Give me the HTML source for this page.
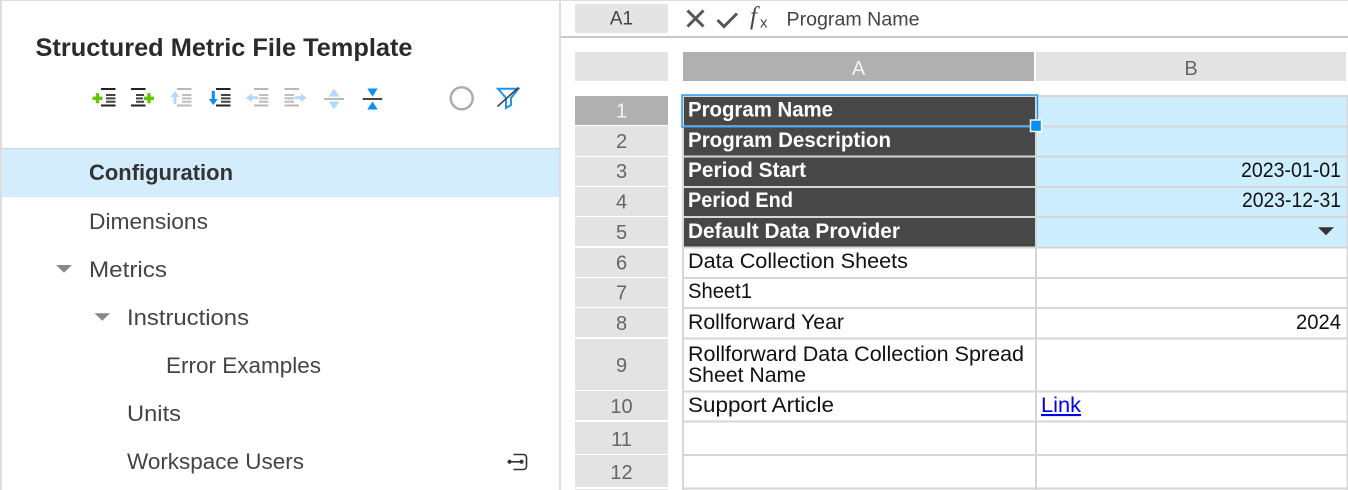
<!DOCTYPE html>
<html lang="en"><head><meta charset="utf-8"><title>Structured Metric File Template</title>
<style>
html,body{margin:0;padding:0;background:#fff;width:1348px;height:490px;overflow:hidden}
svg{display:block}
text{font-family:"Liberation Sans",sans-serif}
.n{font-size:22px;fill:#444}
.c{font-size:21px;fill:#111}
.b{font-size:21px;font-weight:bold;fill:#fff}
.h{font-size:20px;fill:#666;text-anchor:middle}
</style></head><body>
<svg width="1348" height="490" viewBox="0 0 1348 490" xmlns="http://www.w3.org/2000/svg">
<!-- left panel -->
<rect x="0" y="0" width="1348" height="1" fill="#ddd"/>
<rect x="0" y="0" width="2" height="490" fill="#ddd"/>
<rect x="559" y="0" width="2" height="490" fill="#ddd"/>
<rect x="2" y="148" width="557" height="1.5" fill="#d4d4d4"/>
<rect x="2" y="149" width="557" height="48" fill="#d4edfc"/>
<text x="35.500" y="56" font-size="25" font-weight="bold" fill="#2b2b2b" textLength="377" lengthAdjust="spacingAndGlyphs">Structured Metric File Template</text>

<!-- toolbar -->
<g>
<path d="M92.500 98.300h10M97.500 93.300v10" stroke="#66c400" stroke-width="3.400" fill="none"/>
<path d="M101 89h14.500M101 105.500h14.500" stroke="#222" stroke-width="2"/><path d="M106 95h9.500M106 98.400h9.500M106 101.800h9.500" stroke="#444" stroke-width="2"/>
<path d="M131 89h14.500M131 105.500h14.500" stroke="#222" stroke-width="2"/><path d="M136 95h8M136 98.400h7M136 101.800h8" stroke="#444" stroke-width="2"/>
<path d="M144 98.300h10M149 93.300v10" stroke="#66c400" stroke-width="3.400" fill="none"/>

<path d="M177 89h14.500M177 105.500h14.500" stroke="#b8b8b8" stroke-width="2"/><path d="M182 95h9.500M182 98.400h9.500M182 101.800h9.500" stroke="#bfbfbf" stroke-width="2"/>
<path d="M175 91l-4.500 6h3V104h3v-7h3z" fill="#b3d9ff"/>

<path d="M216 89h14.500M216 105.500h14.500" stroke="#222" stroke-width="2"/><path d="M221 95h9.500M221 98.400h9.500M221 101.800h9.500" stroke="#444" stroke-width="2"/>
<path d="M213.300 105l-4.500-6h3V91h3v8h3z" fill="#0a8ef0"/>

<path d="M254 89h14.300M254 105.500h14.300" stroke="#b8b8b8" stroke-width="2"/><path d="M259 95h9.300M259 98.400h9.300M259 101.800h9.300" stroke="#bfbfbf" stroke-width="2"/>
<path d="M246 97.700l6-4.500v3H258v3h-6v3z" fill="#b3d9ff"/>

<path d="M284.500 89h14.500M284.500 105.500h14.500" stroke="#b8b8b8" stroke-width="2"/><path d="M284.500 95h9.500M284.500 98.400h9.500M284.500 101.800h9.500" stroke="#bfbfbf" stroke-width="2"/>
<path d="M306.700 97.700l-6-4.500v3h-6v3h6v3z" fill="#b3d9ff"/>

<rect x="324" y="98" width="20" height="2" fill="#b8b8b8"/>
<path d="M334 88.500l5.500 8h-11zM334 109.500l5.500-8h-11z" fill="#b3d9ff"/>
<rect x="362.700" y="98" width="19.500" height="2" fill="#444"/>
<path d="M367.300 88.500h10.400l-5.200 8zM367.300 109.500h10.400l-5.200-8z" fill="#0a8ef0"/>

<circle cx="461.700" cy="98.300" r="11" fill="none" stroke="#aaa" stroke-width="2.400"/>
<path d="M498 88.800H518.500L511 98V105L506 108V98Z" fill="none" stroke="#1a96f5" stroke-width="2"/>
<path d="M497.500 106.500L518.500 87.500" stroke="#444" stroke-width="1.600"/>
</g>

<!-- tree -->
<text class="n" x="89" y="180" font-weight="bold" textLength="144" lengthAdjust="spacingAndGlyphs" style="fill:#333">Configuration</text>
<text class="n" x="89" y="229" textLength="119" lengthAdjust="spacingAndGlyphs">Dimensions</text>
<path d="M56 265h16l-8 7.700z" fill="#888"/>
<text class="n" x="89" y="277" textLength="78" lengthAdjust="spacingAndGlyphs">Metrics</text>
<path d="M94.500 313.300h15.500l-7.700 7.500z" fill="#888"/>
<text class="n" x="127" y="325" textLength="122" lengthAdjust="spacingAndGlyphs">Instructions</text>
<text class="n" x="166" y="373" textLength="155" lengthAdjust="spacingAndGlyphs">Error Examples</text>
<text class="n" x="127" y="421" textLength="54" lengthAdjust="spacingAndGlyphs">Units</text>
<text class="n" x="127" y="469" textLength="177" lengthAdjust="spacingAndGlyphs">Workspace Users</text>
<path d="M513.500 454.500H523.500A3 3 0 0 1 526.500 457.500V466.500A3 3 0 0 1 523.500 469.500H513.500" fill="none" stroke="#333" stroke-width="1.600"/>
<path d="M509.500 461.800H521.500" stroke="#333" stroke-width="1.600"/>
<circle cx="509.500" cy="461.800" r="2" fill="#333"/><circle cx="521.500" cy="461.800" r="2" fill="#333"/>

<!-- formula bar -->
<rect x="575" y="4" width="93" height="29" rx="2" fill="#e4e4e4"/>
<text x="621.500" y="24.500" font-size="19" fill="#444" text-anchor="middle">A1</text>
<path d="M687.500 10.500L703.500 26.500M703.500 10.500L687.500 26.500" stroke="#555" stroke-width="3" fill="none"/>
<path d="M717.500 20L724 26.500L737 13.500" stroke="#555" stroke-width="3" fill="none"/>
<text x="750" y="24" font-size="25" font-style="italic" fill="#444" style="font-family:'Liberation Serif',serif">f</text>
<text x="760" y="27.500" font-size="15" fill="#444">x</text>
<text x="786.500" y="25.500" font-size="19" fill="#444" textLength="133" lengthAdjust="spacingAndGlyphs">Program Name</text>
<rect x="561" y="36" width="787" height="2" fill="#c8c8c8"/>

<!-- column headers -->
<rect x="575" y="52" width="93" height="29" rx="1" fill="#e4e4e4"/>
<rect x="683" y="52" width="351" height="29" fill="#b0b0b0"/>
<rect x="1036" y="52" width="310" height="29" fill="#e3e3e3"/>
<text class="h" x="858.500" y="75" style="fill:#f4f4f4">A</text>
<text class="h" x="1191" y="75">B</text>

<!-- row headers -->
<g fill="#e3e3e3">
<rect x="575" y="96" width="93" height="29" fill="#b0b0b0"/>
<rect x="575" y="126" width="93" height="30"/>
<rect x="575" y="157" width="93" height="29"/>
<rect x="575" y="187" width="93" height="29"/>
<rect x="575" y="217" width="93" height="29"/>
<rect x="575" y="248" width="93" height="29"/>
<rect x="575" y="278" width="93" height="29"/>
<rect x="575" y="308" width="93" height="29"/>
<rect x="575" y="339" width="93" height="51"/>
<rect x="575" y="391" width="93" height="29"/>
<rect x="575" y="422" width="93" height="32"/>
<rect x="575" y="455" width="93" height="32"/>
<rect x="575" y="489" width="93" height="1"/>
</g>
<text class="h" x="621.500" y="117.500" style="fill:#f4f4f4">1</text>
<text class="h" x="621.500" y="148">2</text>
<text class="h" x="621.500" y="178">3</text>
<text class="h" x="621.500" y="208.500">4</text>
<text class="h" x="621.500" y="239">5</text>
<text class="h" x="621.500" y="269.500">6</text>
<text class="h" x="621.500" y="299.500">7</text>
<text class="h" x="621.500" y="330">8</text>
<text class="h" x="621.500" y="372">9</text>
<text class="h" x="621.500" y="413">10</text>
<text class="h" x="621.500" y="446">11</text>
<text class="h" x="621.500" y="479">12</text>

<!-- cell fills -->
<rect x="1037" y="96" width="310" height="151" fill="#cdeeff"/>
<rect x="683" y="96" width="352" height="151" fill="#474747"/>

<!-- grid lines -->
<g fill="#d6d6d6">
<rect x="682" y="95" width="666" height="2"/>
<rect x="682" y="125.500" width="666" height="2"/>
<rect x="682" y="155.500" width="666" height="2"/>
<rect x="682" y="186" width="666" height="2"/>
<rect x="682" y="216" width="666" height="2"/>
<rect x="682" y="246.500" width="666" height="2"/>
<rect x="682" y="277" width="666" height="2"/>
<rect x="682" y="307" width="666" height="2"/>
<rect x="682" y="337.500" width="666" height="2"/>
<rect x="682" y="390.500" width="666" height="2"/>
<rect x="682" y="420.500" width="666" height="2"/>
<rect x="682" y="454" width="666" height="2"/>
<rect x="682" y="487.500" width="666" height="2"/>
<rect x="682" y="95" width="2" height="395"/>
<rect x="1035" y="95" width="2" height="395"/>
<rect x="1346.500" y="95" width="1.500" height="395"/>
</g>

<!-- cell text -->
<text class="b" x="688" y="116.500" textLength="145" lengthAdjust="spacingAndGlyphs">Program Name</text>
<text class="b" x="688" y="147" textLength="203" lengthAdjust="spacingAndGlyphs">Program Description</text>
<text class="b" x="688" y="177" textLength="118" lengthAdjust="spacingAndGlyphs">Period Start</text>
<text class="b" x="688" y="207" textLength="105" lengthAdjust="spacingAndGlyphs">Period End</text>
<text class="b" x="688" y="238" textLength="212" lengthAdjust="spacingAndGlyphs">Default Data Provider</text>
<text class="c" x="688" y="268" textLength="220" lengthAdjust="spacingAndGlyphs">Data Collection Sheets</text>
<text class="c" x="688" y="298" textLength="64" lengthAdjust="spacingAndGlyphs">Sheet1</text>
<text class="c" x="688" y="329" textLength="156" lengthAdjust="spacingAndGlyphs">Rollforward Year</text>
<text class="c" x="688" y="361" textLength="336" lengthAdjust="spacingAndGlyphs">Rollforward Data Collection Spread</text>
<text class="c" x="688" y="382" textLength="118" lengthAdjust="spacingAndGlyphs">Sheet Name</text>
<text class="c" x="688" y="412" textLength="146" lengthAdjust="spacingAndGlyphs">Support Article</text>
<text class="c" x="1041" y="412" textLength="40" lengthAdjust="spacingAndGlyphs" style="fill:#0000ee" text-decoration="underline">Link</text>
<text class="c" x="1241" y="177" textLength="100" lengthAdjust="spacingAndGlyphs">2023-01-01</text>
<text class="c" x="1242" y="207" textLength="99" lengthAdjust="spacingAndGlyphs">2023-12-31</text>
<text class="c" x="1296" y="329" textLength="45" lengthAdjust="spacingAndGlyphs">2024</text>
<path d="M1318 227.300h16l-8 8z" fill="#333"/>

<!-- selection -->
<rect x="682" y="95" width="355.500" height="32" fill="none" stroke="#1a96f5" stroke-width="1.400"/>
<rect x="1030.500" y="120" width="11" height="11.500" fill="#0a8ef0" stroke="#fff" stroke-width="1.400"/>
</svg>
</body></html>
